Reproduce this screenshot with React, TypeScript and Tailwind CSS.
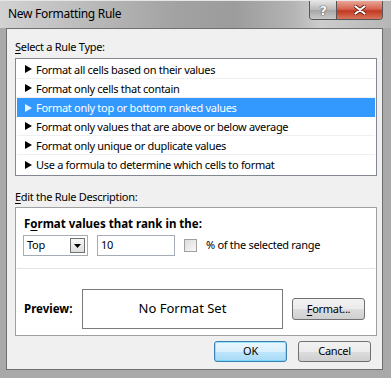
import React from "react";

const rules = [
  "Format all cells based on their values",
  "Format only cells that contain",
  "Format only top or bottom ranked values",
  "Format only values that are above or below average",
  "Format only unique or duplicate values",
  "Use a formula to determine which cells to format",
];

export default function App() {
  return (
    <div
      className="relative w-[391px] h-[378px] overflow-hidden bg-[#a9a9a9] text-[11px] tracking-[-0.3px] text-black"
      style={{ fontFamily: '"Noto Sans", "Open Sans", sans-serif' }}
    >
      {/* title bar */}
      <div className="h-[28px] flex items-start bg-[linear-gradient(to_right,#d2d2d2_0%,#bdbdbd_20%,#a2a2a2_45%,#9c9c9c_60%,#b4b4b4_75%,#cdcdcd_82%,#b6b6b6_100%)] border-t border-[#e6e6e6]">
        <div className="pl-[8px] pt-[4px] text-[12px] leading-[18px] text-black">New Formatting Rule</div>
        <div className="ml-auto mr-[8px] flex h-[19px] rounded-b-[4px] border border-t-0 border-[#555] overflow-hidden">
          <div className="w-[27px] flex items-center justify-center bg-[linear-gradient(to_bottom,#e4e4e4,#b8b8b8_50%,#a6a6a6_51%,#c8c8c8)] border-r border-[#555] text-white font-bold text-[13px] leading-none [text-shadow:0_0_1px_#333,0_0_1px_#333]" style={{ fontFamily: '"DejaVu Sans", sans-serif' }}>
            ?
          </div>
          <div className="w-[45px] flex items-center justify-center bg-[linear-gradient(to_bottom,#eaa595,#d4644f_45%,#c2381f_55%,#d9735c)]">
            <svg width="12" height="10" viewBox="0 0 12 10">
              <path d="M1.5 1.5L10.5 8.5M10.5 1.5L1.5 8.5" stroke="#5a1a10" strokeWidth="3.6" strokeLinecap="round" />
              <path d="M1.5 1.5L10.5 8.5M10.5 1.5L1.5 8.5" stroke="#fff" strokeWidth="2.2" strokeLinecap="round" />
            </svg>
          </div>
        </div>
      </div>

      {/* client area */}
      <div className="absolute left-[6px] top-[28px] w-[377px] h-[342px] border border-[#6e6e6e] bg-[#f0f0f0]">
        <div className="pl-[8px] pr-[5px] pt-[9px] flex flex-col">
          <div className="h-[18px] leading-[18px]">
            <span className="underline underline-offset-2">S</span>elect a Rule Type:
          </div>
          <div className="mt-[2px] w-[362px] h-[118px] border border-[#828790] bg-white p-[1px] flex flex-col">
            {rules.map((r, i) => (
              <div
                key={r}
                className={
                  "h-[19px] flex items-center pl-[8px] gap-[4px] " +
                  (i === 2
                    ? "bg-[#3399ff] text-white"
                    : "text-black " + (i < 5 ? "border-b border-[#f0f0f0]" : ""))
                }
              >
                <svg width="7" height="8" viewBox="0 0 7 8" className="shrink-0">
                  <path d="M0 0L7 4L0 8Z" fill={i === 2 ? "#e8f2ff" : "#000"} />
                </svg>
                <span className="leading-[19px]">{r}</span>
              </div>
            ))}
          </div>

          <div className="mt-[12px] h-[17px] leading-[17px]">
            <span className="underline underline-offset-2">E</span>dit the Rule Description:
          </div>
          <div className="mt-[2px] w-[362px] h-[129px] border border-[#a0a0a0] bg-white flex flex-col">
            <div className="pl-[8px] pt-[7px] font-bold text-[11.5px] tracking-normal h-[26px] leading-[18px]">
              F<span className="underline underline-offset-2">o</span>rmat values that rank in the:
            </div>
            <div className="flex items-center pl-[7px] h-[21px] mt-[1px]">
              <div className="w-[65px] h-[21px] border border-[#a5acb5] bg-white flex items-center pl-[3px]">
                <span className="flex-1">Top</span>
                <div className="w-[15px] h-[15px] mr-[2px] border border-[#707070] bg-[linear-gradient(to_bottom,#f6f6f6,#dedede)] flex items-center justify-center">
                  <svg width="7" height="4" viewBox="0 0 7 4"><path d="M0 0h7L3.5 4z" fill="#000" /></svg>
                </div>
              </div>
              <div className="ml-[9px] w-[78px] h-[21px] border border-[#a5acb5] bg-white flex items-center pl-[3px]">10</div>
              <div className="ml-[9px] w-[13px] h-[13px] border border-[#a0a0a0] bg-[linear-gradient(135deg,#dcdcdc,#f8f8f8)]" />
              <span className="ml-[9px]">% of the selected range</span>
            </div>
            <div className="mt-[12px] mx-[1px] h-px bg-[#e3e3e3]" />
            <div className="flex items-center pl-[8px] mt-[20px]">
              <span className="font-bold text-[11.5px] tracking-normal w-[58px]">Preview:</span>
              <div className="w-[201px] h-[40px] border border-[#7a7a7a] bg-white flex items-center justify-center text-[13px] tracking-normal">
                No Format Set
              </div>
              <div className="ml-[9px] w-[73px] h-[22px] rounded-[3px] border border-[#707070] bg-[linear-gradient(to_bottom,#f2f2f2,#ebebeb_50%,#dddddd_51%,#cfcfcf)] flex items-center justify-center">
                <span><span className="underline underline-offset-2">F</span>ormat...</span>
              </div>
            </div>
          </div>

          <div className="mt-[5px] flex justify-end gap-[11px] pr-[6px]">
            <div className="w-[73px] h-[21px] rounded-[3px] border border-[#3c7fb1] bg-[linear-gradient(to_bottom,#eaf6fd,#d9f0fc_50%,#bee6fd_51%,#a7d9f5)] flex items-center justify-center shadow-[inset_0_0_0_1px_#48d4fb80]">
              OK
            </div>
            <div className="w-[73px] h-[21px] rounded-[3px] border border-[#707070] bg-[linear-gradient(to_bottom,#f2f2f2,#ebebeb_50%,#dddddd_51%,#cfcfcf)] flex items-center justify-center">
              Cancel
            </div>
          </div>
        </div>
      </div>
    </div>
  );
}
